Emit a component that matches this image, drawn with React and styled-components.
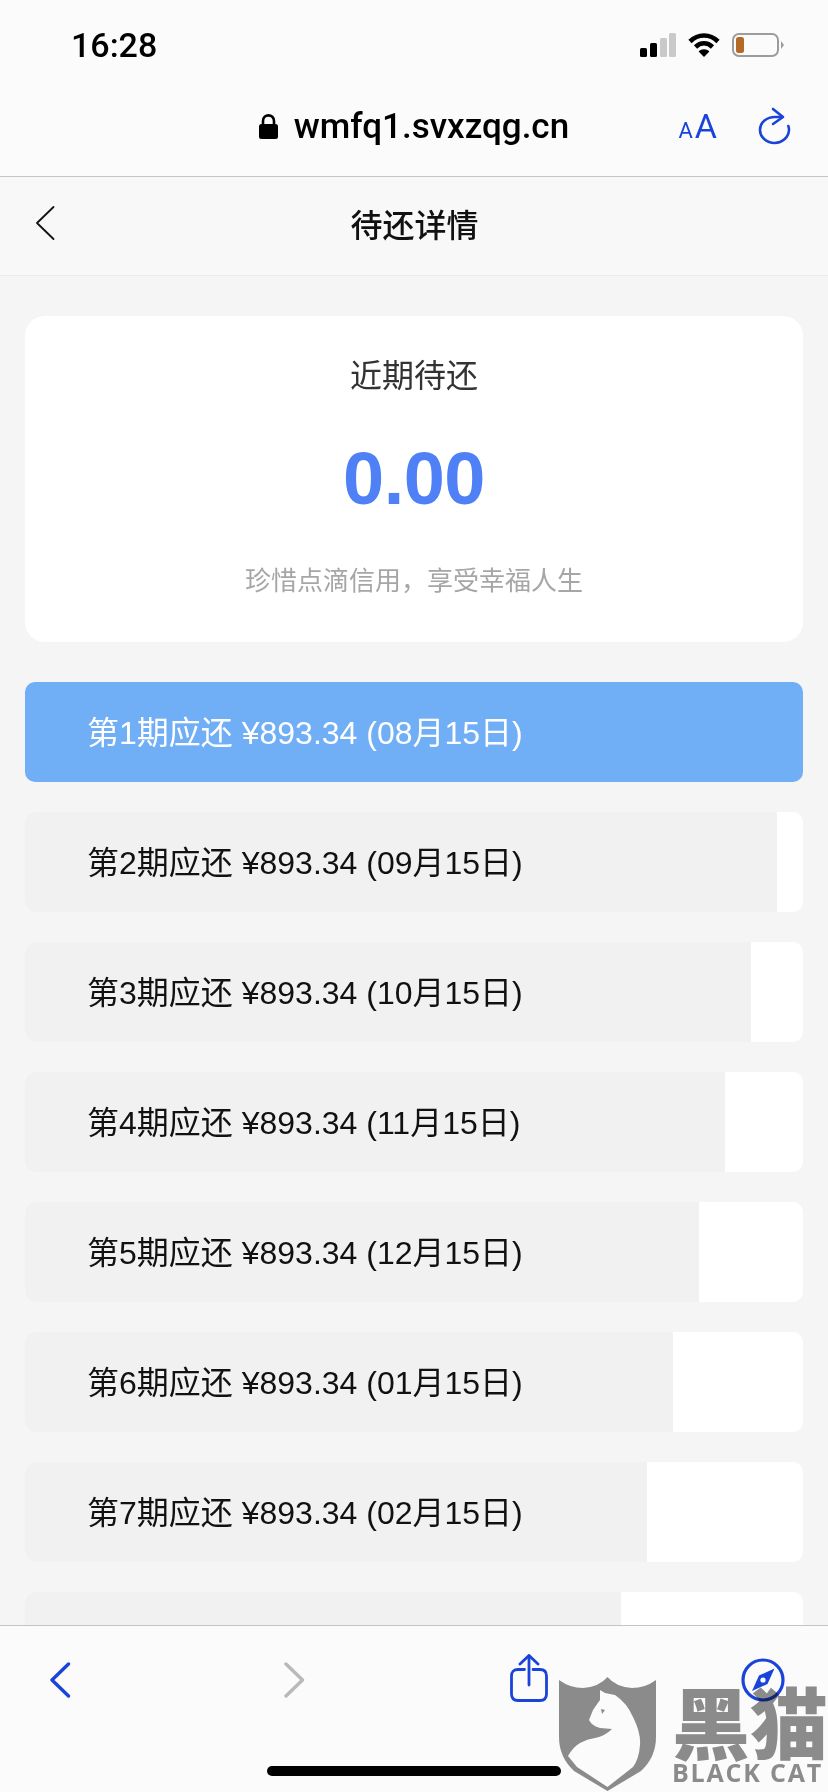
import React from 'react';
import styled, { createGlobalStyle } from 'styled-components';

const BLUE = '#1a44d9';
const CJK = '"Liberation Sans", "Noto Sans CJK SC", sans-serif';

const installments = [
  { id: 1, date: '08月15日', progress: 100, active: true },
  { id: 2, date: '09月15日', progress: 96.67 },
  { id: 3, date: '10月15日', progress: 93.33 },
  { id: 4, date: '11月15日', progress: 90 },
  { id: 5, date: '12月15日', progress: 86.67 },
  { id: 6, date: '01月15日', progress: 83.33 },
  { id: 7, date: '02月15日', progress: 80 },
  // label sits under the toolbar, only the top of the row shows
  { id: 8, progress: 76.67 }
];

function SignalIcon() {
  return (
    <svg width="36" height="24" viewBox="0 0 36 24">
      <rect x="0" y="15" width="7" height="9" rx="1.5" fill="#000" />
      <rect x="10" y="10" width="7" height="14" rx="1.5" fill="#000" />
      <rect x="20" y="5" width="7" height="19" rx="1.5" fill="#c9c9c9" />
      <rect x="29" y="0" width="7" height="24" rx="1.5" fill="#c9c9c9" />
    </svg>
  );
}

function WifiIcon() {
  return (
    <svg width="32" height="24" viewBox="0 0 32 24" fill="none" stroke="#000" strokeWidth="4.6">
      <path d="M2 8.5 C10 0.5 22 0.5 30 8.5" />
      <path d="M7.5 14 C12.5 9 19.5 9 24.5 14" />
      <path d="M16 24 L10.6 18.4 C13.5 15.6 18.5 15.6 21.4 18.4 Z" fill="#000" stroke="none" />
    </svg>
  );
}

function BatteryIcon() {
  return (
    <svg width="52" height="24" viewBox="0 0 52 24">
      <rect x="1" y="1" width="45" height="22" rx="6" fill="none" stroke="#9c9c9c" strokeWidth="2" />
      <rect x="4" y="4" width="8" height="16" rx="2.5" fill="#b46a26" />
      <path d="M49 8 L52 12 L49 16 Z" fill="#9c9c9c" />
    </svg>
  );
}

function LockIcon() {
  return (
    <svg width="19" height="25" viewBox="0 0 19 25">
      <path d="M4 11 V7 C4 -0.5 15 -0.5 15 7 V11" fill="none" stroke="#000" strokeWidth="2.6" />
      <rect x="0" y="10" width="19" height="15" rx="2.5" fill="#000" />
    </svg>
  );
}

function ReloadIcon() {
  return (
    <svg width="34" height="38" viewBox="0 0 34 38" fill="none" stroke={BLUE} strokeWidth="2.6" strokeLinecap="round" strokeLinejoin="round">
      <path d="M23 10 H17 C9 10 2 15 2 23 C2 30.5 9 36 16.5 36 C24.5 36 31 30 31 22.5 C31 21 30.7 20 30.3 19" />
      <path d="M15 2 L25 10 L15 17" />
    </svg>
  );
}

function Chevron({ dir = 'left', color = BLUE, width = 3.4 }) {
  const d = dir === 'left' ? 'M18.5 2 L2 18 L18.5 34' : 'M2 2 L18.5 18 L2 34';
  return (
    <svg width="21" height="36" viewBox="0 0 21 36" fill="none" stroke={color} strokeWidth={width} strokeLinecap="round" strokeLinejoin="round">
      <path d={d} />
    </svg>
  );
}

function ShareIcon() {
  return (
    <svg width="38" height="48" viewBox="0 0 38 48" fill="none" stroke={BLUE} strokeWidth="2.8" strokeLinecap="round" strokeLinejoin="round">
      <path d="M14.5 15.5 H8 Q1.5 15.5 1.5 22 V40 Q1.5 46.5 8 46.5 H30 Q36.5 46.5 36.5 40 V22 Q36.5 15.5 30 15.5 H23" />
      <path d="M19 31 V2" />
      <path d="M10 10 L19 1.5 L28 10" />
    </svg>
  );
}

function CompassIcon() {
  return (
    <svg width="44" height="44" viewBox="0 0 44 44">
      <circle cx="22" cy="22" r="20" fill="none" stroke={BLUE} strokeWidth="3.2" />
      <path d="M33.5 10.5 L26.5 26 L11 33 L18 17.5 Z" fill={BLUE} />
      <circle cx="22" cy="22" r="2.6" fill="#fff" />
    </svg>
  );
}

function ShieldLogo() {
  return (
    <svg width="97" height="114" viewBox="0 0 97 114">
      <path
        d="M0 3 Q11 11 24 11 Q40 10 48.5 0 Q57 10 73 11 Q86 11 97 3 L97 60 Q97 80 82 94 L48.5 114 L15 94 Q0 80 0 60 Z"
        fill="#8e8d8e"
      />
      <path
        d="M41 13 L46 16 L56 18 Q68 26 74 40 Q82 56 81 68 Q80 82 74 90 L48.5 110 L18 90 L9 79 Q14 70 21 66 Q28 62 36 61 Q46 59 53 52 L41 51 Q33 49 30 43 L34 33 Q38 27 41 23 Z"
        fill="#fff"
      />
      <path d="M42 32 L46 33 L43 37 Z" fill="#8e8d8e" />
    </svg>
  );
}

export default function App() {
  return (
    <Screen>
      <GlobalStyle />
      <BrowserBar>
        <StatusBar>
          <Clock>16:28</Clock>
          <StatusIcons>
            <SignalIcon />
            <WifiIcon />
            <BatteryIcon />
          </StatusIcons>
        </StatusBar>
        <AddressRow>
          <span />
          <Address>
            <LockIcon />
            <span>wmfq1.svxzqg.cn</span>
          </Address>
          <AddressActions>
            <TextSize>
              <small>A</small>A
            </TextSize>
            <ReloadIcon />
          </AddressActions>
        </AddressRow>
      </BrowserBar>

      <NavBar>
        <Chevron color="#111" width={1.8} />
        <NavTitle>待还详情</NavTitle>
      </NavBar>

      <Content>
        <SummaryCard>
          <SummaryTitle>近期待还</SummaryTitle>
          <Amount>0.00</Amount>
          <Slogan>珍惜点滴信用，享受幸福人生</Slogan>
        </SummaryCard>
        <PlanList>
          {installments.map(item => (
            <PlanRow key={item.id}>
              <PlanFill $active={item.active} style={{ width: `${item.progress}%` }}>
                {item.date && `第${item.id}期应还 ¥893.34 (${item.date})`}
              </PlanFill>
            </PlanRow>
          ))}
        </PlanList>
      </Content>

      <Toolbar>
        <ToolbarIcons>
          <ToolButton><Chevron /></ToolButton>
          <ToolButton><Chevron dir="right" color="#b9b9b9" /></ToolButton>
          <ToolButton $lift={4}><ShareIcon /></ToolButton>
          <ToolButton><CompassIcon /></ToolButton>
        </ToolbarIcons>
        <HomeIndicator />
      </Toolbar>

      <Watermark>
        <ShieldLogo />
        <WatermarkText>
          <WatermarkTitle>黑猫</WatermarkTitle>
          <WatermarkLatin>BLACK CAT</WatermarkLatin>
        </WatermarkText>
      </Watermark>
    </Screen>
  );
}

const GlobalStyle = createGlobalStyle`
  html, body {
    margin: 0;
    padding: 0;
    background: #f5f5f5;
  }
  * {
    box-sizing: border-box;
  }
`;

const Screen = styled.div`
  position: relative;
  display: flex;
  flex-direction: column;
  width: 828px;
  height: 1792px;
  overflow: hidden;
  background: #f5f5f5;
  font-family: ${CJK};
`;

const BrowserBar = styled.header`
  flex: none;
  height: 177px;
  background: #fbfbfb;
  border-bottom: 1px solid #c4c4c4;
`;

const StatusBar = styled.div`
  display: flex;
  align-items: center;
  justify-content: space-between;
  height: 90px;
  padding: 0 44px 0 71px;
`;

const Clock = styled.span`
  font-family: Roboto, sans-serif;
  font-size: 34px;
  font-weight: 500;
  color: #000;
`;

const StatusIcons = styled.div`
  display: flex;
  align-items: center;
  gap: 12px;
`;

const AddressRow = styled.div`
  display: grid;
  grid-template-columns: 1fr auto 1fr;
  align-items: center;
  height: 72px;
  padding: 0 36px;
`;

const Address = styled.div`
  display: flex;
  align-items: center;
  gap: 16px;
  font-family: Roboto, sans-serif;
  font-size: 35px;
  font-weight: 500;
  color: #000;
`;

const AddressActions = styled.div`
  display: flex;
  align-items: center;
  justify-content: flex-end;
  gap: 41px;
`;

const TextSize = styled.span`
  font-family: Roboto, sans-serif;
  font-size: 34px;
  font-weight: 400;
  line-height: 1;
  color: ${BLUE};

  small {
    font-size: 22px;
    margin-right: 2px;
  }
`;

const NavBar = styled.nav`
  position: relative;
  flex: none;
  display: flex;
  align-items: center;
  height: 99px;
  padding: 0 0 6px 35px;
  background: #f8f8f8;
  border-bottom: 1px solid #ececec;
`;

const NavTitle = styled.h1`
  flex: 1;
  margin: 0 0 0 -20px;
  padding-right: 35px;
  text-align: center;
  font-size: 32px;
  font-weight: 500;
  color: #111;
`;

const Content = styled.main`
  flex: 1;
  min-height: 0;
  overflow: hidden;
  padding: 40px 25px 0;
`;

const SummaryCard = styled.section`
  display: flex;
  flex-direction: column;
  align-items: center;
  height: 326px;
  padding-top: 38px;
  background: #fff;
  border-radius: 20px;
`;

const SummaryTitle = styled.div`
  font-size: 32px;
  line-height: 44px;
  color: #333;
`;

const Amount = styled.div`
  margin-top: 41px;
  font-family: "Liberation Sans", sans-serif;
  font-size: 74px;
  font-weight: 700;
  letter-spacing: -0.5px;
  line-height: 80px;
  color: #4f80f5;
`;

const Slogan = styled.div`
  margin-top: 44px;
  font-size: 26px;
  line-height: 36px;
  color: #a6a6a6;
`;

const PlanList = styled.div`
  display: flex;
  flex-direction: column;
  gap: 30px;
  margin-top: 40px;
`;

const PlanRow = styled.div`
  flex: none;
  height: 100px;
  background: #fff;
  border-radius: 10px;
  overflow: hidden;
`;

const PlanFill = styled.div`
  display: flex;
  align-items: center;
  height: 100%;
  padding: 0 0 4px 62px;
  font-size: 32px;
  white-space: pre;
  background: ${p => (p.$active ? '#70aef6' : '#f1f1f1')};
  color: ${p => (p.$active ? '#fff' : '#111')};
`;

const Toolbar = styled.footer`
  position: relative;
  flex: none;
  height: 167px;
  background: #fbfbfb;
  border-top: 1px solid #c4c4c4;
`;

const ToolbarIcons = styled.div`
  display: flex;
  align-items: center;
  justify-content: space-between;
  height: 108px;
  padding: 0 43px 0 38px;
`;

const ToolButton = styled.div`
  display: flex;
  align-items: center;
  justify-content: center;
  width: 44px;
  height: 50px;
  margin-bottom: ${p => p.$lift || 0}px;
`;

const HomeIndicator = styled.div`
  width: 294px;
  height: 10px;
  margin: 32px 0 0 267px;
  background: #000;
  border-radius: 5px;
`;

const Watermark = styled.div`
  position: absolute;
  left: 559px;
  top: 1677px;
  display: flex;
  gap: 16px;
  mix-blend-mode: multiply;
  color: #8e8d8e;
`;

const WatermarkText = styled.div`
  display: flex;
  flex-direction: column;
  width: 155px;
  padding-top: 7px;
`;

const WatermarkTitle = styled.div`
  font-family: "Noto Sans CJK SC", sans-serif;
  font-size: 78px;
  font-weight: 900;
  line-height: 72px;
  white-space: nowrap;
`;

const WatermarkLatin = styled.div`
  margin-top: 3px;
  font-family: "Open Sans", sans-serif;
  font-size: 25px;
  font-weight: 700;
  line-height: 26px;
  letter-spacing: 1.8px;
  white-space: nowrap;
`;
